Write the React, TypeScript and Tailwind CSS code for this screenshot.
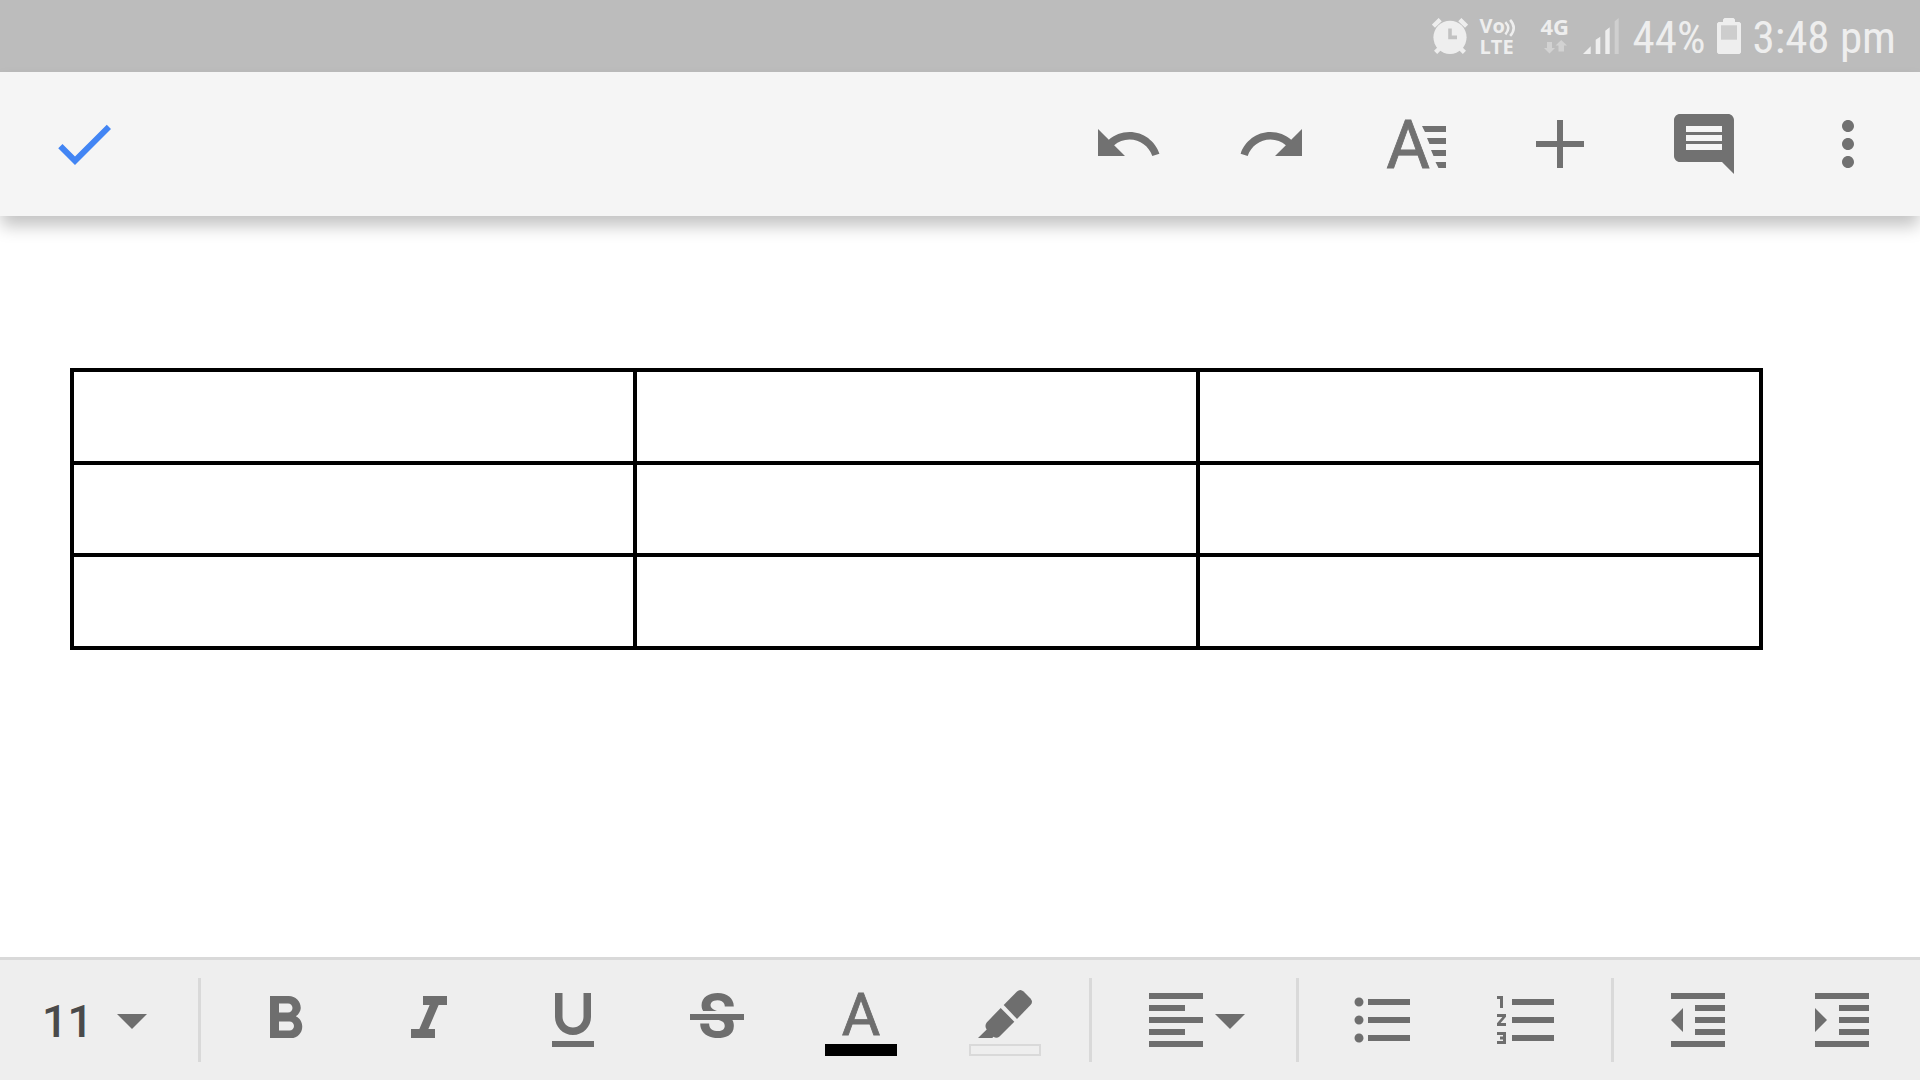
import type { ReactNode } from "react";
import {
  MdArrowDropDown,
  MdCheck,
  MdFormatAlignLeft,
  MdFormatBold,
  MdFormatIndentDecrease,
  MdFormatIndentIncrease,
  MdFormatItalic,
  MdFormatListBulleted,
  MdFormatListNumbered,
  MdFormatUnderlined,
  MdMoreVert,
  MdStrikethroughS,
} from "react-icons/md";

const ICON = 72;

function StatusBar() {
  return (
    <header className="flex h-[72px] shrink-0 items-center justify-end bg-[#bcbcbc] pr-6 font-['Roboto_Condensed','Liberation_Sans_Narrow',Roboto,sans-serif] text-[45px] leading-[68px] text-[#eeeeee]">

      <svg className="mr-3" width="36" height="36" viewBox="0 0 36 36" aria-label="Alarm set">
        <g stroke="currentColor" strokeWidth="4.5">
          <path d="M1.4 8.2 8.2 1.6M34.6 8.2 27.8 1.6" />
          <path d="M3.6 34.4 9 29M32.4 34.4 27 29" />
        </g>
        <circle cx="18" cy="19.3" r="16.6" fill="currentColor" />
        <path d="M18 10.5v8.9h7" fill="none" stroke="#c2c2c2" strokeWidth="3.6" />
      </svg>

      <div className="mr-6 w-[37px] font-['Open_Sans',sans-serif] text-[20px] leading-[21px] font-bold">
        <div className="flex h-[21px]">
          <span>Vo</span>
          <svg className="mt-[3px] -ml-px" width="14" height="20" viewBox="0 0 14 20">
            <path
              d="M1.5 3.5q6.5 6.5 0 13.5M6.8 1q8 9 0 17.7"
              fill="none"
              stroke="currentColor"
              strokeWidth="2.8"
            />
          </svg>
        </div>
        <div>LTE</div>
      </div>

      <div className="mr-3 w-[30px] font-['Open_Sans',sans-serif] text-[22px] leading-[22px] font-bold">
        <div>4G</div>
        <svg width="30" height="20" viewBox="0 0 30 20" fill="#d2d2d2">
          <path d="M6 5h5v6h3l-5.5 5.5L3 11h3zM17.5 14.5H23v-6h3L20.2 3l-5.7 5.5h3z" />
        </svg>
      </div>

      <svg className="mr-3.5" width="36" height="36" viewBox="0 0 36 36" fill="currentColor" aria-label="Signal">
        <path d="M0 36h7.7v-7.7zM12.7 36h4.6V18.7l-4.6 3zM22.3 36h4.4V9.3l-4.4 3.4z" />
        <path d="M31.7 36h4V0l-4 3.3z" fill="#cfcfcf" />
      </svg>

      <span className="pt-1">44%</span>

      <svg className="mr-[11px] ml-3" width="24" height="36" viewBox="0 0 24 36" aria-label="Battery">
        <path
          d="M7.5 0h9L18 1.5V4h4.5L24 5.5v29L22.5 36h-21L0 34.5v-29L1.5 4H6V1.5z"
          fill="currentColor"
        />
        <path d="M4 7.3h16v14.4H4z" fill="#cdcdcd" />
      </svg>

      <span className="pt-1">3:48 pm</span>

    </header>
  );
}

function ToolButton({ label, children }: { label: string; children: ReactNode }) {
  return (
    <button
      type="button"
      aria-label={label}
      className="flex w-36 shrink-0 items-center justify-center"
    >
      {children}
    </button>
  );
}

function Divider() {
  return <div className="mx-3 h-[84px] w-[3px] shrink-0 bg-[#d9d9d9]" />;
}

function TopBar() {
  return (
    <nav className="relative flex h-36 shrink-0 items-stretch justify-between bg-[#f5f5f5] text-[#717171] shadow-[0_11px_16px_-1px_rgba(0,0,0,0.24)]">

      <button type="button" aria-label="Done" className="flex items-center pl-12">
        <MdCheck size={ICON} className="text-[#4285f4]" />
      </button>

      <div className="flex">

        <ToolButton label="Undo">
          <svg width="72" height="72" viewBox="0 0 24 24" fill="currentColor">
            <path d="M12.5 8c-2.65 0-5.05.99-6.9 2.6L2 7v9h9l-3.62-3.62c1.39-1.16 3.16-1.88 5.12-1.88 3.54 0 6.55 2.31 7.6 5.5l2.37-.78C21.08 11.03 17.15 8 12.5 8z" />
          </svg>
        </ToolButton>

        <ToolButton label="Redo">
          <svg width="72" height="72" viewBox="0 0 24 24" fill="currentColor">
            <path d="M18.4 10.6C16.55 8.99 14.15 8 11.5 8c-4.65 0-8.58 3.03-9.96 7.22L3.9 16c1.05-3.19 4.05-5.5 7.6-5.5 1.95 0 3.73.72 5.12 1.88L13 16h9V7l-3.6 3.6z" />
          </svg>
        </ToolButton>

        <ToolButton label="Text format">
          <svg
            className="overflow-visible font-[Roboto,sans-serif] font-normal"
            width="72"
            height="72"
            viewBox="0 0 72 72"
            fill="currentColor"
          >
            <text x="28" y="60" fontSize="67" textAnchor="middle" stroke="currentColor" strokeWidth="0.8">A</text>
            <path d="M42 18h24v6H45zM47 30h19v6H49.5zM51 42h15v6H53.5zM55.5 54H66v6h-7.5z" />
          </svg>
        </ToolButton>

        <ToolButton label="Insert">
          <svg width="72" height="72" viewBox="0 0 24 24" fill="currentColor">
            <path d="M20 13h-7v7h-2v-7H4v-2h7V4h2v7h7z" />
          </svg>
        </ToolButton>

        <ToolButton label="Comment">
          <svg width="72" height="72" viewBox="0 0 24 24" fill="currentColor">
            <path d="M21.99 4c0-1.1-.89-2-1.99-2H4c-1.1 0-2 .9-2 2v12c0 1.1.9 2 2 2h14l4 4-.01-18zM18 14H6v-2h12v2zm0-3H6V9h12v2zm0-3H6V6h12v2z" />
          </svg>
        </ToolButton>

        <ToolButton label="More options">
          <MdMoreVert size={ICON} />
        </ToolButton>

      </div>

    </nav>
  );
}

function Document() {
  const cell = "border-4 border-black";

  return (
    <main className="flex-1 bg-white pt-[152px] pr-[157px] pl-[70px]">
      <table className="h-[282px] w-full table-fixed border-collapse">
        <tbody>
          {[0, 1, 2].map((row) => (
            <tr key={row}>
              <td className={cell} />
              <td className={cell} />
              <td className={cell} />
            </tr>
          ))}
        </tbody>
      </table>
    </main>
  );
}

function FormatBar() {
  return (
    <footer className="flex h-[123px] shrink-0 items-center overflow-hidden border-t-[3px] border-[#d9d9d9] bg-[#eeeeee] text-[#6e6e6e]">

      <label className="relative flex h-full w-[186px] shrink-0 items-center">
        <select
          aria-label="Font size"
          defaultValue="11"
          className="h-full w-full appearance-none bg-transparent pt-1 pl-[42px] font-[Roboto,sans-serif] text-[45px] font-medium text-[#4a4a4a]"
        >
          <option>10</option>
          <option>11</option>
          <option>12</option>
        </select>
        <MdArrowDropDown size={ICON} className="pointer-events-none absolute left-24" />
      </label>

      <Divider />

      <ToolButton label="Bold">
        <MdFormatBold size={ICON} />
      </ToolButton>
      <ToolButton label="Italic">
        <MdFormatItalic size={ICON} />
      </ToolButton>
      <ToolButton label="Underline">
        <MdFormatUnderlined size={ICON} />
      </ToolButton>
      <ToolButton label="Strikethrough">
        <MdStrikethroughS size={ICON} />
      </ToolButton>

      <ToolButton label="Text color">
        <svg
          className="overflow-visible font-[Roboto,sans-serif] font-normal"
          width="72"
          height="72"
          viewBox="0 0 72 72"
          fill="currentColor"
        >
          <text x="36" y="51" fontSize="59" textAnchor="middle" stroke="currentColor" strokeWidth="0.8">A</text>
          <path d="M0 60h72v12H0z" fill="#000" />
        </svg>
      </ToolButton>

      <ToolButton label="Highlight color">
        <svg width="72" height="72" viewBox="0 0 72 72" fill="currentColor">
          <path d="M34.7 21 48 7.5q3.3-3 6.6 0l6.9 7q3 3.3 0 6.6L48 35z" />
          <path d="M31.7 24 45.3 37.7 30.5 52.5q-3 2.5-6 .2l-1.2 1.3H9l8.7-8.6q-2.5-3.4 0-7z" />
          <path d="M1 61h70v10H1z" fill="none" stroke="#d9d9d9" strokeWidth="2" />
        </svg>
      </ToolButton>

      <Divider />

      <button
        type="button"
        aria-label="Alignment"
        aria-haspopup="menu"
        className="flex w-[180px] shrink-0 items-center pl-9"
      >
        <MdFormatAlignLeft size={ICON} className="shrink-0" />
        <MdArrowDropDown size={ICON} className="-ml-[18px] shrink-0" />
      </button>

      <Divider />

      <ToolButton label="Bulleted list">
        <MdFormatListBulleted size={ICON} />
      </ToolButton>
      <ToolButton label="Numbered list">
        <MdFormatListNumbered size={ICON} />
      </ToolButton>

      <Divider />

      <ToolButton label="Decrease indent">
        <MdFormatIndentDecrease size={ICON} />
      </ToolButton>
      <ToolButton label="Increase indent">
        <MdFormatIndentIncrease size={ICON} />
      </ToolButton>

    </footer>
  );
}

function App() {
  return (
    <div className="flex h-screen flex-col overflow-hidden bg-white">
      <StatusBar />
      <TopBar />
      <Document />
      <FormatBar />
    </div>
  );
}

export default App;
